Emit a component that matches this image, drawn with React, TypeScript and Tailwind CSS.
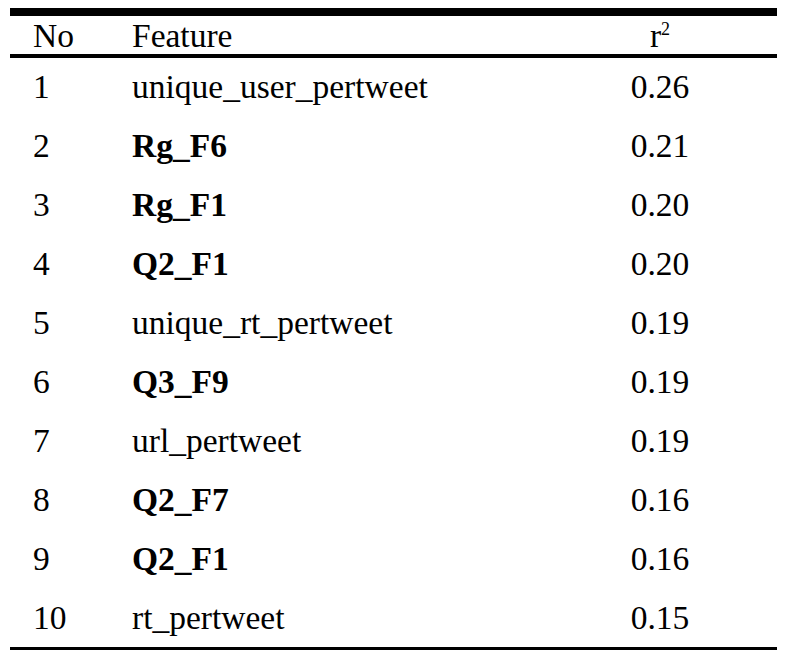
import React from "react";

const rows: { no: string; feat: string; bold: boolean; r: string }[] = [
  { no: "1", feat: "unique_user_pertweet", bold: false, r: "0.26" },
  { no: "2", feat: "Rg_F6", bold: true, r: "0.21" },
  { no: "3", feat: "Rg_F1", bold: true, r: "0.20" },
  { no: "4", feat: "Q2_F1", bold: true, r: "0.20" },
  { no: "5", feat: "unique_rt_pertweet", bold: false, r: "0.19" },
  { no: "6", feat: "Q3_F9", bold: true, r: "0.19" },
  { no: "7", feat: "url_pertweet", bold: false, r: "0.19" },
  { no: "8", feat: "Q2_F7", bold: true, r: "0.16" },
  { no: "9", feat: "Q2_F1", bold: true, r: "0.16" },
  { no: "10", feat: "rt_pertweet", bold: false, r: "0.15" },
];

export default function App() {
  return (
    <div
      className="w-[786px] h-[651px] bg-white text-black pt-[8px] pl-[10px]"
      style={{ fontFamily: '"Liberation Serif", "Times New Roman", serif' }}
    >
      <div className="w-[767px]">
        <div className="h-[8px] bg-black" />
        <div className="flex h-[38px] leading-[39px] text-[33.5px] pl-[23px]">
          <div className="w-[99px]">No</div>
          <div className="w-[468px]">Feature</div>
          <div className="w-[120px] text-center">
            r<span className="text-[18px] relative top-[-12px]">2</span>
          </div>
        </div>
        <div className="h-[4px] bg-black" />
        {rows.map((r, i) => (
          <div
            key={r.no}
            className={
              "flex leading-[57px] text-[33.5px] pl-[23px] " +
              (i === rows.length - 1 ? "h-[58px]" : "h-[59px]")
            }
          >
            <div className="w-[99px]">{r.no}</div>
            <div className={"w-[468px] " + (r.bold ? "font-bold" : "")}>{r.feat}</div>
            <div className="w-[120px] text-center">{r.r}</div>
          </div>
        ))}
        <div className="h-[3px] bg-black" />
      </div>
    </div>
  );
}
